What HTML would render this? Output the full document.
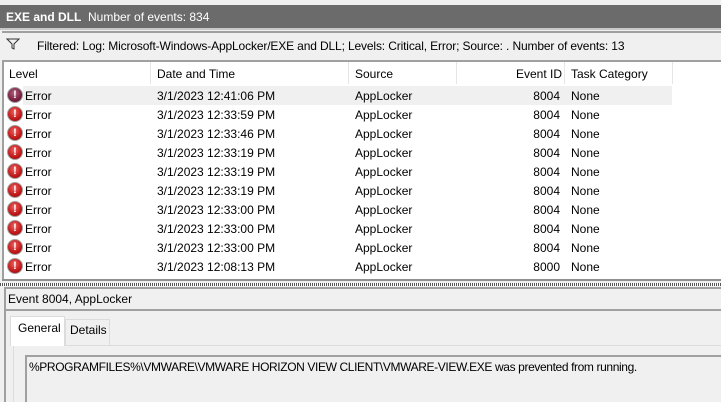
<!DOCTYPE html>
<html><head><style>
*{margin:0;padding:0;box-sizing:border-box}
body{width:721px;height:402px;overflow:hidden;background:#f0f0f0;font-family:"Liberation Sans",sans-serif;font-size:12px;color:#000;position:relative}
.a{position:absolute;white-space:nowrap}
.ic{position:absolute;left:7px;width:16px;height:16px;border-radius:50%;background:radial-gradient(circle at 45% 35%,#f06060,#c01818 60%,#8a0a0a);border:1px solid #a0a0a0;color:#fff;font-weight:bold;font-size:11px;line-height:14px;text-align:center}
.ic.s{background:radial-gradient(circle at 45% 35%,#b06080,#7a2040 60%,#501030)}
</style></head><body>
<div class="a" style="left:0;top:5px;width:721px;height:23px;background:#6b6b6b"></div>
<div class="a" style="left:6px;top:10px;color:#fff;font-weight:bold">EXE and DLL</div>
<div class="a" style="left:88px;top:10px;color:#fff">Number of events: 834</div>
<div class="a" style="left:0;top:28px;width:721px;height:2px;background:#c8c8c8"></div>
<div class="a" style="left:2px;top:31px;width:719px;height:2px;background:#a0a0a0"></div>
<svg class="a" style="left:6px;top:38px" width="14" height="12"><path d="M1 1H13L8 6V11L6 10V6Z" fill="none" stroke="#333" stroke-width="1"/></svg>
<div class="a" style="left:37px;top:39px;letter-spacing:-0.14px">Filtered: Log: Microsoft-Windows-AppLocker/EXE and DLL; Levels: Critical, Error; Source: . Number of events: 13</div>
<div class="a" style="left:2px;top:60px;width:719px;height:2px;background:#a0a0a0"></div>
<div class="a" style="left:2px;top:62px;width:719px;height:217px;background:#fff;border-left:2px solid #a0a0a0"></div>
<div class="a" style="left:150px;top:62px;width:1px;height:22px;background:#e5e5e5"></div>
<div class="a" style="left:348px;top:62px;width:1px;height:22px;background:#e5e5e5"></div>
<div class="a" style="left:456px;top:62px;width:1px;height:22px;background:#e5e5e5"></div>
<div class="a" style="left:564px;top:62px;width:1px;height:22px;background:#e5e5e5"></div>
<div class="a" style="left:672px;top:62px;width:1px;height:22px;background:#e5e5e5"></div>
<div class="a" style="left:9px;top:67px">Level</div>
<div class="a" style="left:157px;top:67px">Date and Time</div>
<div class="a" style="left:355px;top:67px">Source</div>
<div class="a" style="left:516px;top:67px">Event ID</div>
<div class="a" style="left:571px;top:67px">Task Category</div>
<div class="a" style="left:23px;top:86px;width:649px;height:19px;background:#f0f0f0"></div>
<div id="rows"></div>
<script>
var d=["12:41:06","12:33:59","12:33:46","12:33:19","12:33:19","12:33:19","12:33:00","12:33:00","12:33:00","12:08:13"];
var h="";for(var i=0;i<10;i++){var y=86+i*19;
h+='<div class="ic'+(i==0?' s':'')+'" style="top:'+(y+1)+'px">!</div><div class="a" style="left:25px;top:'+(y+3)+'px">Error</div><div class="a" style="left:157px;top:'+(y+3)+'px">3/1/2023 '+d[i]+' PM</div><div class="a" style="left:355px;top:'+(y+3)+'px">AppLocker</div><div class="a" style="left:520px;top:'+(y+3)+'px;width:40px;text-align:right">'+(i==9?'8000':'8004')+'</div><div class="a" style="left:571px;top:'+(y+3)+'px">None</div>';}
document.getElementById('rows').innerHTML=h;
</script>
<div class="a" style="left:2px;top:279px;width:719px;height:2px;background:#909090"></div>
<div class="a" style="left:0;top:283px;width:721px;height:3px;background:repeating-linear-gradient(90deg,#555 0 1px,#fff 1px 2px)"></div>
<div class="a" style="left:4px;top:287px;width:717px;height:115px;border-left:2px solid #a0a0a0;border-top:2px solid #a0a0a0"></div>
<div class="a" style="left:8px;top:292px">Event 8004, AppLocker</div>
<div class="a" style="left:6px;top:309px;width:715px;height:2px;background:#a0a0a0"></div>
<div class="a" style="left:13px;top:345px;width:708px;height:1px;background:#dcdcdc"></div>
<div class="a" style="left:13px;top:345px;width:1px;height:57px;background:#dcdcdc"></div>
<div class="a" style="left:10px;top:316px;width:55px;height:30px;background:#fff;border:1px solid #dcdcdc;border-bottom:none"></div>
<div class="a" style="left:18px;top:321px">General</div>
<div class="a" style="left:65px;top:319px;width:45px;height:26px;background:#f0f0f0;border:1px solid #dcdcdc;border-bottom:none"></div>
<div class="a" style="left:70px;top:323px">Details</div>
<div class="a" style="left:25px;top:355px;width:696px;height:47px;border-left:2px solid #a0a0a0;border-top:2px solid #a0a0a0"></div>
<div class="a" style="left:29px;top:360px;letter-spacing:-0.38px">%PROGRAMFILES%\VMWARE\VMWARE HORIZON VIEW CLIENT\VMWARE-VIEW.EXE was prevented from running.</div>
</body></html>
